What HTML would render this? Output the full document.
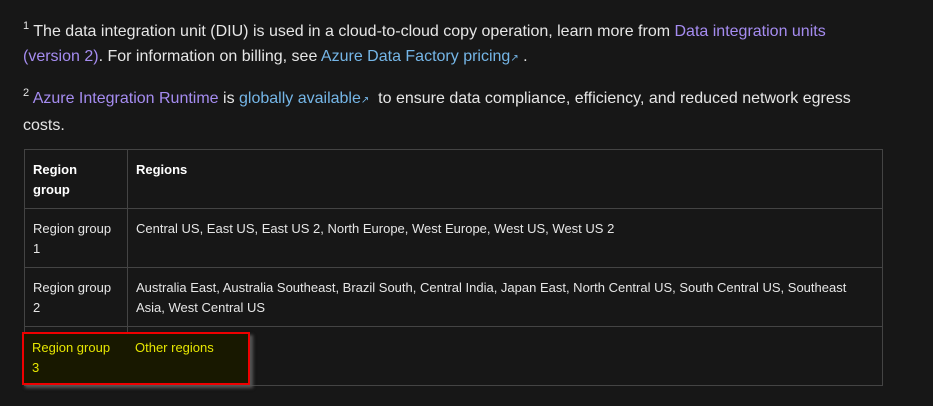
<!DOCTYPE html>
<html><head><style>
body{margin:0;background:#171717;width:933px;height:406px;overflow:hidden;font-family:"Liberation Sans",sans-serif;color:#e6e6e6}
p{position:absolute;left:23px;margin:0;font-size:16px;line-height:25px;width:900px;white-space:nowrap}
sup{font-size:11px;vertical-align:7px}
.v{color:#a58cf0}.b{color:#75b6e7}
.ext{font-size:10px;color:#75b6e7}
table{position:absolute;left:24px;top:149px;width:859px;border-collapse:collapse;font-size:13px;line-height:20px}
td,th{border:1px solid #444;padding:10px 8px 7px 8px;vertical-align:top;text-align:left;box-sizing:border-box}
th{font-weight:bold;color:#fff}
td:first-child,th:first-child{width:103px}
.hl{position:absolute;left:22px;top:332px;width:224px;height:49px;border:2px solid #e00;background:#181800;box-shadow:3px 3px 3px #555}
.hl span{position:absolute;color:#e6e600;font-size:13px;line-height:20px}
</style></head><body>
<p style="top:14px"><sup>1</sup> The data integration unit (DIU) is used in a cloud-to-cloud copy operation, learn more from <span class="v">Data integration units</span><br><span class="v">(version 2)</span>. For information on billing, see <span class="b">Azure Data Factory pricing</span><span class="ext">&#x2197;</span> .</p>
<p style="top:81px"><sup>2</sup> <span class="v">Azure Integration Runtime</span> is <span class="b">globally available</span><span class="ext">&#x2197;</span>&nbsp; to ensure data compliance, efficiency, and reduced network egress<br>costs.</p>
<table>
<tr style="height:59px"><th>Region<br>group</th><th>Regions</th></tr>
<tr style="height:59px"><td>Region group<br>1</td><td>Central US, East US, East US 2, North Europe, West Europe, West US, West US 2</td></tr>
<tr style="height:59px"><td>Region group<br>2</td><td>Australia East, Australia Southeast, Brazil South, Central India, Japan East, North Central US, South Central US, Southeast<br>Asia, West Central US</td></tr>
<tr style="height:59px"><td></td><td></td></tr>
</table>
<div class="hl"><span style="left:8px;top:4px">Region group<br>3</span><span style="left:111px;top:4px">Other regions</span></div>
</body></html>
